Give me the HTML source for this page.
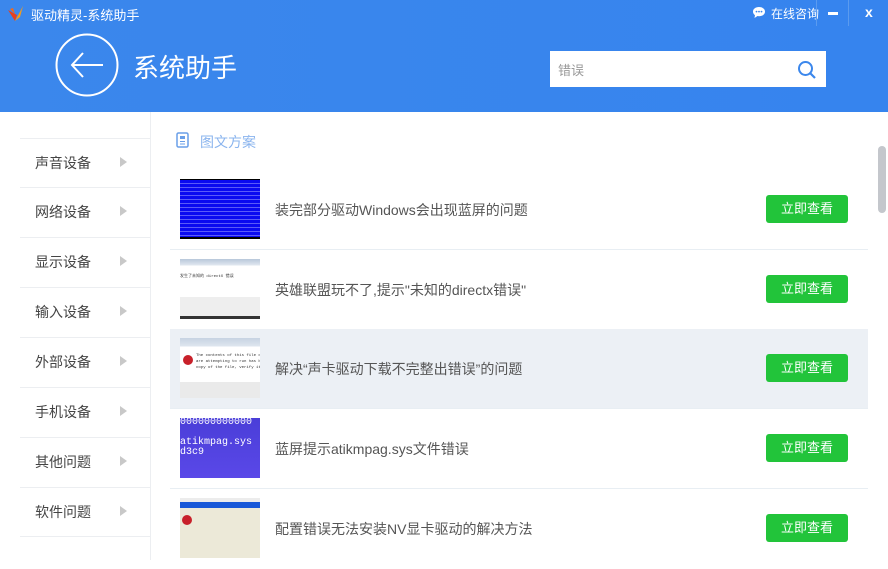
<!DOCTYPE html>
<html><head><meta charset="utf-8"><style>
*{margin:0;padding:0;box-sizing:border-box}
body{width:888px;height:560px;overflow:hidden;background:#fff;font-family:"Liberation Sans","Noto Sans CJK SC",sans-serif;position:relative}
.hdr{position:absolute;left:0;top:0;width:888px;height:112px;background:linear-gradient(90deg,#3b87ec,#3684ee)}
.abs{position:absolute}
.side{position:absolute;left:0;top:112px;width:151px;height:448px;border-right:1px solid #eceef1}
.si{position:absolute;left:20px;width:130px;height:50px;border-top:1px solid #eceef1;font-size:14px;color:#444;line-height:48px;padding-left:15px}
.si:after{content:"";position:absolute;left:100px;top:18px;border-left:7px solid #c8c8c8;border-top:5px solid transparent;border-bottom:5px solid transparent}
.row{position:absolute;left:170px;width:698px;height:80px;border-bottom:1px solid #e8eef3}
.row .th{position:absolute;left:10px;top:9px;width:80px;height:60px;overflow:hidden;font-family:"Liberation Mono",monospace}
.row .t{position:absolute;left:105px;top:1px;line-height:78px;font-size:14px;color:#555}
.row .b{position:absolute;left:596px;top:25px;width:82px;height:28px;border-radius:3px;background:#22c43a;color:#fff;font-size:13px;text-align:center;line-height:28px}
</style></head><body>
<div class="hdr"></div>
<svg class="abs" style="left:7px;top:5px" width="18" height="17" viewBox="0 0 18 17"><path d="M1 5 L8 16 L10 10 Z" fill="#e8401c"/><path d="M8 16 L16 1 L13 12 Z" fill="#f39b1a"/><path d="M3 4 L8 9 L6 3Z" fill="#f06a1c"/></svg>
<div class="abs" style="left:31px;top:5px;color:#fff;font-size:13px">驱动精灵-系统助手</div>
<svg class="abs" style="left:752px;top:6px" width="14" height="13" viewBox="0 0 14 13"><path d="M7 1C3.5 1 1 3 1 5.6c0 1.5.8 2.7 2 3.5L2.5 12l3-2c.5.1 1 .2 1.5.2 3.5 0 6-2 6-4.6S10.5 1 7 1z" fill="#fff"/><circle cx="4.5" cy="5.6" r=".9" fill="#3b87ec"/><circle cx="7" cy="5.6" r=".9" fill="#3b87ec"/><circle cx="9.5" cy="5.6" r=".9" fill="#3b87ec"/></svg>
<div class="abs" style="left:771px;top:5px;color:#fff;font-size:12px">在线咨询</div>
<div class="abs" style="left:816px;top:0;width:1px;height:26px;background:#5b9bef"></div>
<div class="abs" style="left:848px;top:0;width:1px;height:26px;background:#5b9bef"></div>
<div class="abs" style="left:828px;top:12px;width:10px;height:3px;background:#fff"></div>
<div class="abs" style="left:865px;top:4px;color:#fff;font-size:14px;font-weight:bold">x</div>
<svg class="abs" style="left:55px;top:33px" width="64" height="64" viewBox="0 0 64 64"><circle cx="32" cy="32" r="30.5" fill="none" stroke="#fff" stroke-width="2"/><path d="M17 32H48M28 20L17 32L28 44" fill="none" stroke="#fff" stroke-width="2"/></svg>
<div class="abs" style="left:133px;top:48px;color:#fff;font-size:26px">系统助手</div>
<div class="abs" style="left:550px;top:51px;width:276px;height:36px;background:#fff"></div>
<div class="abs" style="left:558px;top:60px;color:#999;font-size:13px">错误</div>
<svg class="abs" style="left:797px;top:60px" width="20" height="20" viewBox="0 0 20 20"><circle cx="8.5" cy="8.5" r="6.5" fill="none" stroke="#3b87ec" stroke-width="2"/><path d="M13 13L18 18" stroke="#3b87ec" stroke-width="2.2"/></svg>
<div class="side">
<div class="si" style="top:26px">声音设备</div>
<div class="si" style="top:75px">网络设备</div>
<div class="si" style="top:125px">显示设备</div>
<div class="si" style="top:175px">输入设备</div>
<div class="si" style="top:225px">外部设备</div>
<div class="si" style="top:275px">手机设备</div>
<div class="si" style="top:325px">其他问题</div>
<div class="si" style="top:375px;border-bottom:1px solid #eceef1">软件问题</div>
</div>
<svg class="abs" style="left:176px;top:132px" width="13" height="16" viewBox="0 0 13 16"><rect x="1" y="1" width="11" height="14" rx="1.5" fill="none" stroke="#6a9fe8" stroke-width="1.5"/><rect x="4" y="4" width="5" height="3" fill="#6a9fe8"/><path d="M4 9.5H9M4 12H9" stroke="#6a9fe8"/></svg>
<div class="abs" style="left:200px;top:132px;color:#8ab4ee;font-size:14px">图文方案</div>
<div class="row" style="top:170px"><div class="th" style="background:repeating-linear-gradient(#0a0af0 0,#0a0af0 3px,#5a5af8 3px,#5a5af8 4px);border-bottom:2px solid #000;border-top:1px solid #000"></div><div class="t">装完部分驱动Windows会出现蓝屏的问题</div><div class="b">立即查看</div></div>
<div class="row" style="top:250px"><div class="th" style="background:linear-gradient(#b8c7da 0,#dfe6ef 6px,#fff 7px,#fff 38px,#eeeeee 38px,#eee 57px,#333 57px);font-size:4px;color:#333;padding-top:14px">发生了未知的 directX 错误</div><div class="t">英雄联盟玩不了,提示"未知的directx错误"</div><div class="b">立即查看</div></div>
<div class="row" style="top:329px;height:80px;background:#ecf0f5"><div class="th" style="background:linear-gradient(#c7d3e2 0,#dde5ee 8px,#fff 9px,#fff 44px,#eaeaea 44px)"><div style="position:absolute;left:3px;top:17px;width:10px;height:10px;border-radius:50%;background:#c8202a"></div><div style="position:absolute;left:16px;top:15px;font-size:4px;color:#333;line-height:6px;white-space:nowrap">The contents of this file cannot be<br>are attempting to run has been c<br>copy of the file, verify its integrity</div></div><div class="t">解决“声卡驱动下载不完整出错误”的问题</div><div class="b">立即查看</div></div>
<div class="row" style="top:409px"><div class="th" style="background:linear-gradient(#4a3ed8,#5a48e8);color:#fff;font-size:10px;line-height:10px;white-space:nowrap">000000000000<br><br>atikmpag.sys<br>d3c9</div><div class="t">蓝屏提示atikmpag.sys文件错误</div><div class="b">立即查看</div></div>
<div class="row" style="top:489px;border:none"><div class="th" style="background:linear-gradient(#ececec 0,#ececec 4px,#1858d8 4px,#1858d8 10px,#ece9d8 10px)"><div style="position:absolute;left:2px;top:17px;width:10px;height:10px;border-radius:50%;background:#c8202a"></div></div><div class="t">配置错误无法安装NV显卡驱动的解决方法</div><div class="b">立即查看</div></div>
<div class="abs" style="left:878px;top:146px;width:8px;height:67px;border-radius:4px;background:#c4c7cc"></div>
</body></html>
